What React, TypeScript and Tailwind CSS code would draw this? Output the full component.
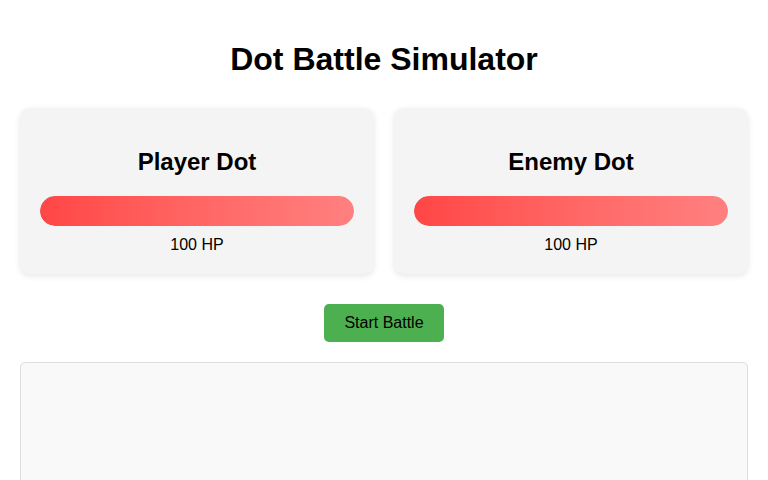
const fighters = [
  { name: "Player Dot", hp: 100 },
  { name: "Enemy Dot", hp: 100 },
];

const FighterCard = ({ name, hp }: { name: string; hp: number }) => {
  return (
    <div className="flex-1 rounded-[10px] bg-[#f4f4f4] p-5 text-center shadow-[0_2px_6px_rgba(0,0,0,0.1)]">
      <h2 className="my-[20px] text-[24px] font-bold leading-[28px]">{name}</h2>
      <div className="mb-[10px] h-[30px] w-full overflow-hidden rounded-full bg-[#ddd]">
        <div
          className="h-full rounded-full bg-gradient-to-r from-[#ff4646] to-[#ff8080]"
          style={{ width: `${hp}%` }}
        />
      </div>
      <p className="text-[16px] leading-[18px]">{hp} HP</p>
    </div>
  );
};

const App = () => {
  return (
    <div className="min-h-screen bg-white p-5 text-black" style={{ fontFamily: '"Liberation Sans", Arial, sans-serif' }}>
      <h1 className="mt-[21px] mb-[30px] text-center text-[32px] font-bold leading-[37px]">Dot Battle Simulator</h1>
      <div className="flex gap-5">
        {fighters.map((f) => (
          <FighterCard key={f.name} name={f.name} hp={f.hp} />
        ))}
      </div>
      <div className="mt-[30px] flex justify-center">
        <button className="rounded-[5px] bg-[#4caf50] px-5 py-[10px] text-[16px] leading-[18px] text-black">
          Start Battle
        </button>
      </div>
      <div className="mt-5 h-[200px] rounded-[5px] border border-[#ddd] bg-[#f9f9f9]" />
    </div>
  );
};

export default App;
